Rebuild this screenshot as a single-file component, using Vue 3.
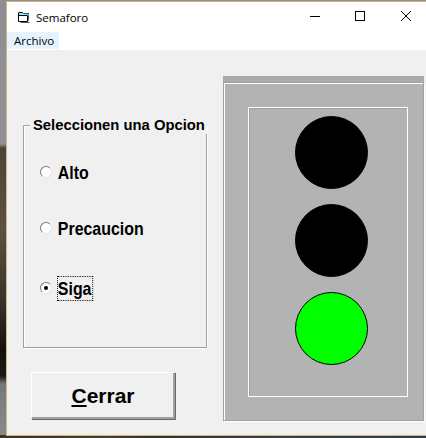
<script setup>
const options = [
  { label: 'Alto', checked: false },
  { label: 'Precaucion', checked: false },
  { label: 'Siga', checked: true }
]
const lights = ['#000000', '#000000', '#00ff00']
</script>

<template>
  <div class="desktop">
    <div class="window">
      <header class="titlebar">
        <svg class="app-icon" width="14" height="14" viewBox="0 0 14 14">
          <path d="M1.5 1.5H5.5L6.5 2.5H11.5V3.5" fill="none" stroke="#000" />
          <path d="M2 2.5H11V3.5H2Z" fill="#00d8e8" />
          <path d="M1.5 2V10.5H10.5V4.5H2" fill="none" stroke="#000" />
          <path d="M10.5 4.5H11.5V9.5M3.5 11.5H12.5" fill="none" stroke="#555" />
        </svg>
        <span class="title">Semaforo</span>
        <div class="controls">
          <svg width="46" height="22" viewBox="0 0 46 22"><path d="M19 10.5H29" stroke="#000" /></svg>
          <svg width="46" height="22" viewBox="0 0 46 22"><rect x="18.5" y="5.5" width="9" height="9" fill="none" stroke="#000" /></svg>
          <svg width="46" height="22" viewBox="0 0 46 22"><path d="M18 5L28 15M28 5L18 15" stroke="#000" /></svg>
        </div>
      </header>
      <nav class="menubar"><span class="menu-item">Archivo</span></nav>
      <main class="client">
        <section class="left">
          <div class="group">
            <span class="group-title">Seleccionen una Opcion</span>
            <label v-for="o in options" :key="o.label" class="option">
              <span class="radio" :class="{ on: o.checked }"></span>
              <span class="option-text" :class="{ focus: o.checked }">{{ o.label }}</span>
            </label>
          </div>
          <button class="close"><u>C</u>errar</button>
        </section>
        <section class="panel">
          <div class="panel-band"></div>
          <div class="panel-body">
            <div class="inner">
              <div v-for="(c, i) in lights" :key="i" class="light" :style="{ background: c }"></div>
            </div>
          </div>
        </section>
      </main>
    </div>
  </div>
</template>

<style scoped>
.desktop {
  width: 426px;
  height: 438px;
  box-sizing: border-box;
  padding: 1px 0 2px 6px;
  overflow: hidden;
  background:
    linear-gradient(90deg, #3a3226 0, #4a3d2c 110px, #33302c 150px, #3a4046 280px, #2c3c4c 426px) 0 100% / 100% 3px no-repeat,
    linear-gradient(180deg, #8f8f93 0, #909096 144px, #4e4436 148px, #5c5140 230px, #3a3328 300px, #14110c 350px, #1c1a16 376px, #77787a 384px, #8a8a8c 438px);
}
.window {
  height: 100%;
  box-sizing: border-box;
  border: 1px solid #cdb77e;
  border-right: 0;
  display: flex;
  flex-direction: column;
  background: #f0f0f0;
}
.titlebar {
  height: 30px;
  flex: none;
  background: #fff;
  display: flex;
  align-items: center;
  padding-left: 10px;
  font: 11.5px "Open Sans", sans-serif;
  color: #000;
}
.app-icon { margin-top: 1px; }
.title { margin-left: 5px; margin-top: 1px; }
.controls {
  margin-left: auto;
  display: flex;
  margin-right: -3px;
}
.controls svg { display: block; }
.menubar {
  height: 18px;
  flex: none;
  background: #fff;
}
.menu-item {
  display: block;
  width: 52px;
  height: 17px;
  box-sizing: border-box;
  padding-left: 7px;
  background: #e5f3ff;
  font: 11.5px/18px "Open Sans", sans-serif;
  color: #000;
}
.client {
  flex: 1;
  display: flex;
  padding: 26px 2px 14px 16px;
}
.left {
  width: 200px;
  flex: none;
  display: flex;
  flex-direction: column;
  padding-top: 49px;
}
.group {
  position: relative;
  width: 184px;
  height: 223px;
  box-sizing: border-box;
  border: 1px solid #a0a0a0;
  box-shadow: inset 1px 1px 0 #fff, 1px 1px 0 #fff;
  padding: 34px 0 0 16px;
  display: flex;
  flex-direction: column;
  gap: 32px;
}
.group-title {
  position: absolute;
  left: 6px;
  top: -9px;
  padding: 0 2px 0 3px;
  background: #f0f0f0;
  font: bold 14.8px/17px "Liberation Sans", sans-serif;
  color: #000;
  white-space: nowrap;
}
.option {
  display: flex;
  align-items: center;
  gap: 6px;
  height: 24px;
}
.option:last-child { margin-top: 4px; }
.radio {
  width: 12px;
  height: 12px;
  flex: none;
  box-sizing: border-box;
  border-radius: 50%;
  border: 1px solid;
  border-color: #7a7a7a #e4e4e4 #e4e4e4 #7a7a7a;
  background: #fff;
  display: flex;
  align-items: center;
  justify-content: center;
}
.radio.on::after {
  content: "";
  width: 4px;
  height: 4px;
  border-radius: 50%;
  background: #000;
}
.option-text {
  font: bold 18.5px/23px "Liberation Sans", sans-serif;
  color: #000;
  transform: scaleX(0.86);
  transform-origin: left center;
  border: 1px dotted transparent;
  padding: 0 1px 0 0;
  margin-left: -1px;
  white-space: nowrap;
}
.option-text.focus { border-color: #000; }
.close {
  margin: 24px 0 0 8px;
  width: 144px;
  height: 47px;
  padding: 0;
  background: #f0f0f0;
  border: 1px solid #a0a0a0;
  border-top-color: #fff;
  border-left-color: #fff;
  box-shadow: 1px 1px 0 #696969, inset -1px -1px 0 #a0a0a0;
  font: bold 21px "Liberation Sans", sans-serif;
  color: #000;
}
.panel {
  width: 201px;
  flex: none;
  display: flex;
  flex-direction: column;
  height: 345px;
}
.panel-band {
  height: 6px;
  flex: none;
  background: #ababab;
}
.panel-body {
  flex: 1;
  box-sizing: border-box;
  background: #b3b3b3;
  border: 1px solid #a0a0a0;
  box-shadow: inset 1px 1px 0 #fff, 1px 1px 0 #fff;
  padding: 24px 15px 23px 24px;
  display: flex;
}
.inner {
  flex: 1;
  box-sizing: border-box;
  background: #b3b3b3;
  border: 1px solid #fff;
  box-shadow: inset 1px 1px 0 #a0a0a0;
  padding: 8px 0 0 6px;
  display: flex;
  flex-direction: column;
  align-items: center;
  gap: 15px;
}
.light {
  width: 73px;
  height: 73px;
  box-sizing: border-box;
  border-radius: 50%;
  border: 1px solid #000;
  flex: none;
}
</style>
